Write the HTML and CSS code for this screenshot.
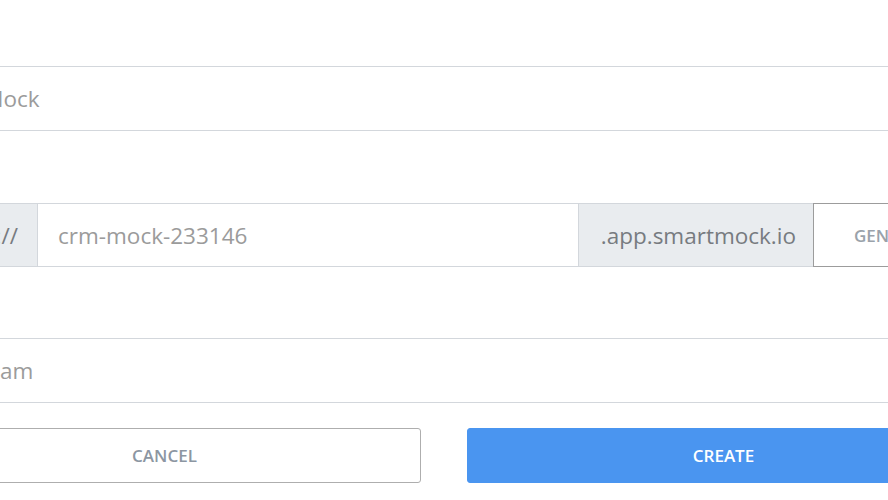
FILE: index.html
```html
<!DOCTYPE html>
<html lang="en">
<head>
<meta charset="utf-8">
<title>Create mock</title>
<link rel="stylesheet" href="styles.css">
</head>
<body>
<form class="form">
  <div class="field">
    <div class="input">CRM Mock</div>
  </div>
  <div class="field field-group">
    <div class="group">
      <span class="addon addon-prefix">https://</span>
      <div class="input input-grow">crm-mock-233146</div>
      <span class="addon addon-suffix">.app.smartmock.io</span>
      <button type="button" class="btn-generate">GENERATE</button>
    </div>
  </div>
  <div class="field field-last">
    <div class="input">Dev Team</div>
  </div>
  <div class="actions">
    <button type="button" class="btn btn-cancel">CANCEL</button>
    <button type="button" class="btn btn-create">CREATE</button>
  </div>
</form>
</body>
</html>
```
FILE: styles.css
```css
html, body {
  margin: 0;
  padding: 0;
  background: #ffffff;
}
body {
  font-family: "Open Sans", "Noto Sans", sans-serif;
  overflow: hidden;
  width: 888px;
  height: 500px;
}
.form {
  margin-left: -92px;
  width: 1072px;
  padding-top: 66px;
}
.field {
  margin-bottom: 72px;
}
.field-group {
  margin-bottom: 71px;
}
.field-last {
  margin-bottom: 25px;
}
.input {
  box-sizing: border-box;
  height: 65px;
  border: 1px solid #d3d7dc;
  padding: 0 20px;
  display: flex;
  align-items: center;
  font-size: 22.5px;
  color: #9b9b9b;
  background: #fff;
  white-space: nowrap;
}
.group {
  display: flex;
  height: 64px;
}
.group > * {
  box-sizing: border-box;
  height: 64px;
}
.addon {
  display: flex;
  align-items: center;
  background: #e9ecef;
  border: 1px solid #d3d7dc;
  font-size: 22.5px;
  color: #777b80;
  white-space: nowrap;
}
.addon-prefix {
  width: 129px;
  justify-content: flex-end;
  padding-right: 19px;
  border-right: none;
}
.input-grow {
  flex: 1;
  min-width: 0;
  height: 64px;
}
.addon-suffix {
  padding: 0 17px 0 22px;
  border-left: none;
  border-right: none;
}
.btn-generate {
  width: 167px;
  border: 1px solid #9c9c9c;
  background: #fff;
  font-family: inherit;
  font-size: 17px;
  font-weight: 600;
  color: #9aa2aa;
  text-align: left;
  padding: 0 0 0 40px;
  white-space: nowrap;
}
.actions {
  display: grid;
  grid-template-columns: 1fr 1fr;
  gap: 46px;
}
.btn {
  box-sizing: border-box;
  height: 55px;
  border-radius: 3px;
  font-family: inherit;
  font-size: 17px;
  font-weight: 600;
}
.btn-cancel {
  background: #fff;
  border: 1px solid #aeaeae;
  color: #8c96a2;
}
.btn-create {
  background: #4a95f0;
  border: 1px solid #4a95f0;
  color: #ffffff;
}
```
